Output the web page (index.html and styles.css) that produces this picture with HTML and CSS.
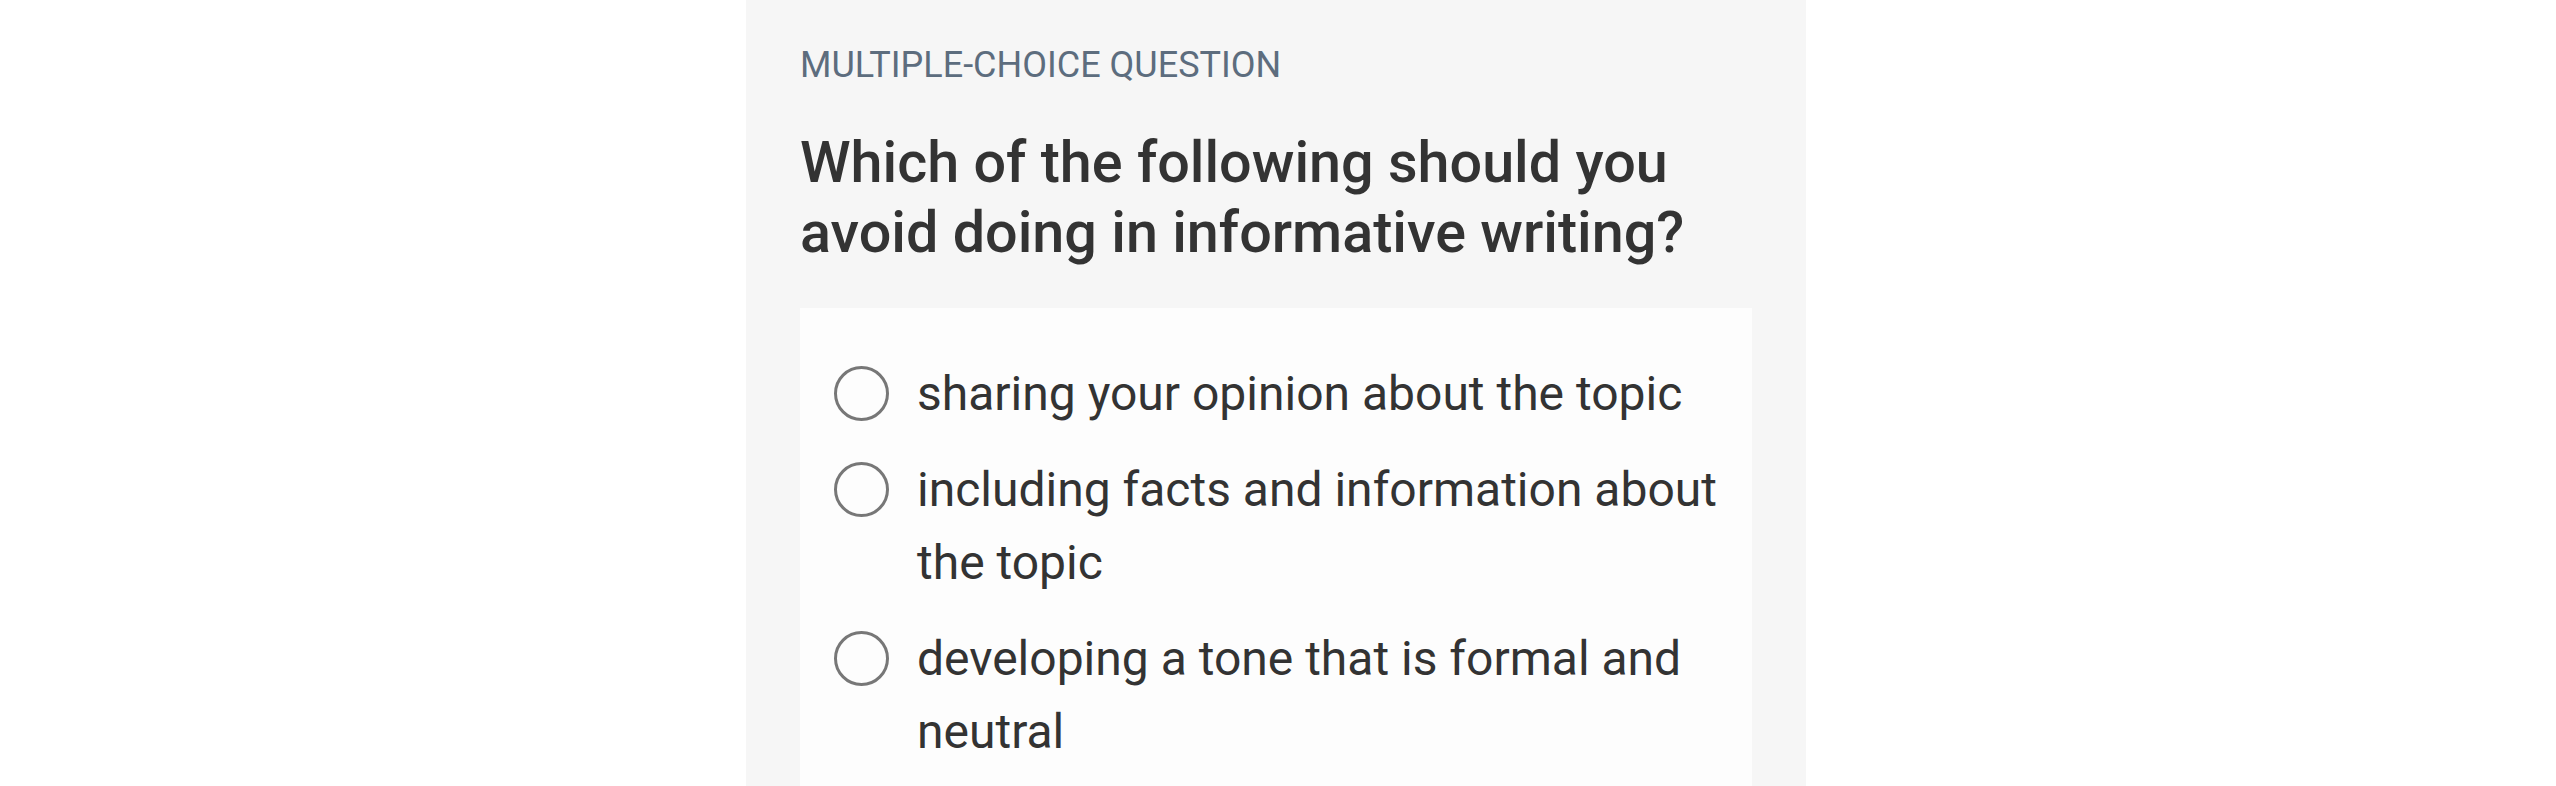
FILE: index.html
```html
<!DOCTYPE html>
<html lang="en">
<head>
<meta charset="utf-8">
<title>Multiple-choice question</title>
<link rel="stylesheet" href="styles.css">
</head>
<body>
<main class="panel">
  <div class="label">MULTIPLE-CHOICE QUESTION</div>
  <h1 class="question">Which of the following should you avoid doing in informative writing?</h1>
  <div class="card">
    <ul class="choices">
      <li class="choice"><span class="radio"></span><span class="choice-text">sharing your opinion about the topic</span></li>
      <li class="choice"><span class="radio"></span><span class="choice-text">including facts and information about the topic</span></li>
      <li class="choice"><span class="radio"></span><span class="choice-text">developing a tone that is formal and neutral</span></li>
    </ul>
  </div>
</main>
</body>
</html>
```
FILE: styles.css
```css
html, body {
  margin: 0;
  padding: 0;
  background: #ffffff;
}
body {
  font-family: Roboto, "Noto Sans", "Liberation Sans", sans-serif;
  height: 786px;
  overflow: hidden;
}
.panel {
  width: 1060px;
  margin-left: 746px;
  box-sizing: border-box;
  padding: 44px 54px 0 54px;
  background: #f6f6f6;
  min-height: 786px;
}
.label {
  font-size: 36px;
  line-height: 42px;
  color: #5d6d7e;
  font-weight: 400;
}
.question {
  margin: 42px 0 0 0;
  max-width: 900px;
  font-size: 57.5px;
  line-height: 70px;
  font-weight: 500;
  color: #333333;
}
.card {
  margin-top: 40px;
  background: #fdfdfd;
  padding: 49px 20px 40px 34px;
}
.choices {
  list-style: none;
  margin: 0;
  padding: 0;
  display: flex;
  flex-direction: column;
  gap: 23px;
}
.choice {
  display: flex;
  align-items: flex-start;
  gap: 28px;
}
.radio {
  flex: none;
  width: 55px;
  height: 55px;
  box-sizing: border-box;
  border: 3px solid #777777;
  border-radius: 50%;
  margin-top: 9px;
}
.choice-text {
  font-size: 48px;
  line-height: 73px;
  color: #333333;
}
```
